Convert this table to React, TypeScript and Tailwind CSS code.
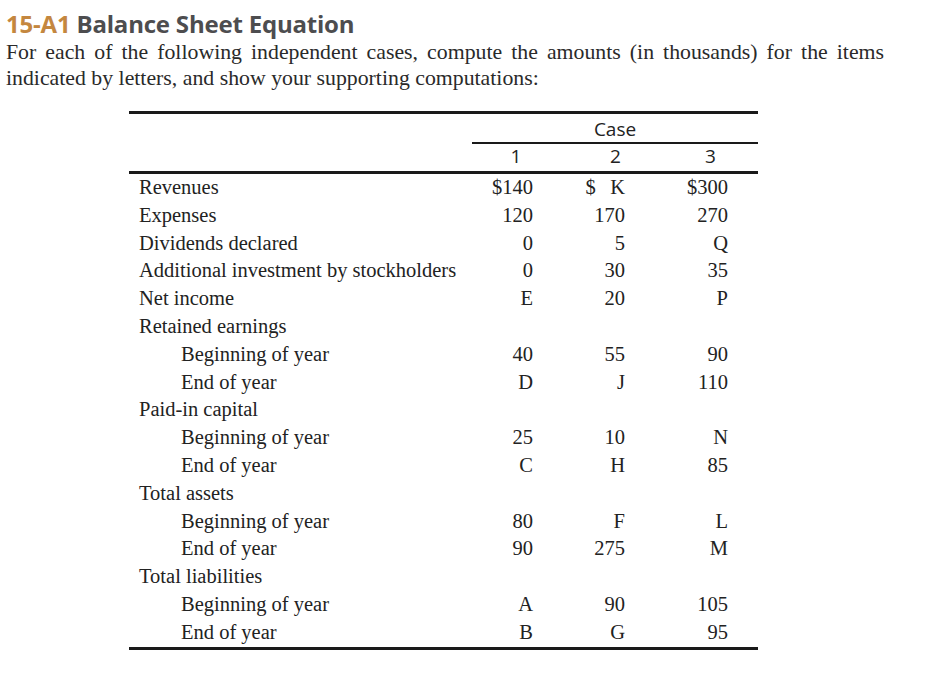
import React from "react";

type Row = { label: string; indent?: boolean; v?: [string, string, string] };

const rows: Row[] = [
  { label: "Revenues", v: ["$140", "$\u2002\u2009K", "$300"] },
  { label: "Expenses", v: ["120", "170", "270"] },
  { label: "Dividends declared", v: ["0", "5", "Q"] },
  { label: "Additional investment by stockholders", v: ["0", "30", "35"] },
  { label: "Net income", v: ["E", "20", "P"] },
  { label: "Retained earnings" },
  { label: "Beginning of year", indent: true, v: ["40", "55", "90"] },
  { label: "End of year", indent: true, v: ["D", "J", "110"] },
  { label: "Paid-in capital" },
  { label: "Beginning of year", indent: true, v: ["25", "10", "N"] },
  { label: "End of year", indent: true, v: ["C", "H", "85"] },
  { label: "Total assets" },
  { label: "Beginning of year", indent: true, v: ["80", "F", "L"] },
  { label: "End of year", indent: true, v: ["90", "275", "M"] },
  { label: "Total liabilities" },
  { label: "Beginning of year", indent: true, v: ["A", "90", "105"] },
  { label: "End of year", indent: true, v: ["B", "G", "95"] },
];

const serif = "font-['Liberation_Serif',serif]";
const sans = "font-['Open_Sans',sans-serif]";

export default function App() {
  return (
    <div className="w-[933px] h-[678px] bg-white text-[#222]">
      <div className="px-[6px] pt-[9px]">
        <h1 className={`${sans} text-[24px] font-bold leading-[30px] text-[#4d4d4f] tracking-[-0.2px]`}>
          <span className="text-[#c4873f]">15-A1</span> Balance Sheet Equation
        </h1>
        <div className={`${serif} text-[21.8px] leading-[26px] text-[#2a2a2a] w-[878px]`}>
          <div className="[text-align-last:justify] text-justify">
            For each of the following independent cases, compute the amounts (in thousands) for the items
          </div>
          <div>indicated by letters, and show your supporting computations:</div>
        </div>
      </div>

      <div className="ml-[129px] mt-[20px] w-[629px]">
        <div className="h-[3px] bg-[#1a1a1a]" />
        <div className="grid grid-cols-[343px_96px_95px_95px]">
          <div />
          <div className={`col-span-3 ${sans} text-[19px] h-[28px] leading-[30px] text-center`}>Case</div>
        </div>
        <div className="flex justify-end">
          <div className="w-[286px] h-[2px] bg-[#1a1a1a]" />
        </div>
        <div className={`grid grid-cols-[343px_96px_95px_95px] ${sans} text-[19px] h-[27px] leading-[24px] text-center`}>
          <div />
          <div className="pr-[8px]">1</div>
          <div>2</div>
          <div>3</div>
        </div>
        <div className="h-[3px] bg-[#1a1a1a]" />
        <div className={`${serif} text-[20.5px]`}>
          {rows.map((r, i) => (
            <div key={i} className="grid grid-cols-[343px_96px_95px_95px] h-[27.8px] leading-[27.8px]">
              <div className={r.indent ? "pl-[52px]" : "pl-[10px]"}>{r.label}</div>
              <div className="text-right pr-[35px]">{r.v?.[0]}</div>
              <div className="text-right pr-[38px] whitespace-pre">{r.v?.[1]}</div>
              <div className="text-right pr-[30px]">{r.v?.[2]}</div>
            </div>
          ))}
        </div>
        <div className="h-[3px] bg-[#1a1a1a]" />
      </div>
    </div>
  );
}
